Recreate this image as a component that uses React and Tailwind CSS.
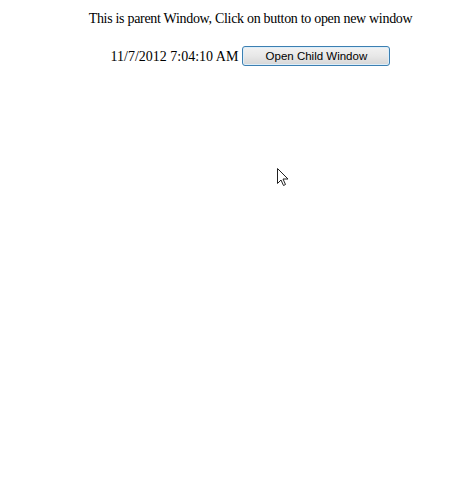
export default function App() {
  return (
    <div className="min-h-[482px] bg-white pl-[27px] pt-[10px] text-center text-[14px] leading-[18px] text-black" style={{ fontFamily: '"Liberation Serif", "Times New Roman", serif' }}>
      <p className="tracking-[-0.3px]">This is parent Window, Click on button to open new window</p>
      <div className="mt-[18px] flex items-center justify-center gap-[4px]">
        <span className="mt-[1px]">11/7/2012 7:04:10 AM</span>
        <button
          type="button"
          className="h-[20px] w-[148px] rounded-[3px] border border-[#3c7fb1] bg-gradient-to-b from-[#f2f2f2] via-[#e8e8e8] to-[#d6d6d6] text-[11.5px] leading-[18px] text-black shadow-[inset_0_0_0_1px_#dceefa]"
          style={{ fontFamily: '"Liberation Sans", Arial, sans-serif' }}
        >
          Open Child Window
        </button>
      </div>
      <div className="relative h-[140px]">
        <svg className="absolute left-[250px] top-[102px]" width="12" height="19" viewBox="0 0 12 19">
          <path d="M0.5 0.5 L0.5 15.5 L4 12 L6.5 17.5 L8.5 16.5 L6 11 L11 11 Z" fill="#fff" stroke="#222" strokeWidth="1" strokeLinejoin="round" />
        </svg>
      </div>
    </div>
  );
}
